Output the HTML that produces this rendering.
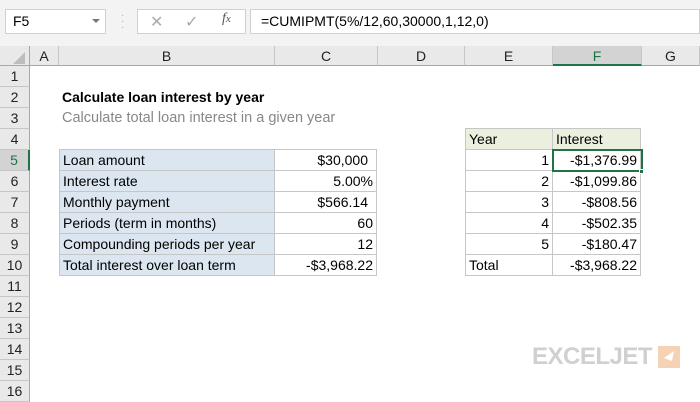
<!DOCTYPE html><html><head><meta charset="utf-8"><style>
*{margin:0;padding:0;box-sizing:border-box}
body{width:700px;height:400px;overflow:hidden;background:#fff;font-family:"Liberation Sans",Arial,sans-serif;position:relative;font-size:14px;color:#000}
.a{position:absolute}
.rh{position:absolute;left:0;width:30px;height:21px;background:#e9e9e9;border-bottom:1px solid #c6c6c6;border-right:1px solid #a8a8a8;text-align:center;line-height:21px;font-size:14px;color:#222}
.ch{position:absolute;top:46px;height:20px;background:#e9e9e9;border-right:1px solid #c6c6c6;border-bottom:1px solid #a8a8a8;text-align:center;line-height:20px;color:#222}
.c{position:absolute;height:22px;line-height:21px;padding:0 3px;white-space:nowrap;border:1px solid #c6c6c6;margin:-1px 0 0 -1px}
.r{text-align:right}
.bl{background:#dce6f0}
.gr{background:#ebf0de}
</style></head><body>
<div class="a" style="left:0;top:0;width:700px;height:46px;background:#f3f3f3"></div>
<div class="a" style="left:5px;top:9px;width:101px;height:25px;background:#fff;border:1px solid #d0d0d0;line-height:23px;padding-left:7px">F5</div>
<div class="a" style="left:92px;top:19px;width:0;height:0;border-left:4px solid transparent;border-right:4px solid transparent;border-top:4px solid #777"></div>
<div class="a" style="left:121px;top:13px;color:#aaa;font-size:10px;line-height:6px">·<br>·<br>·</div>
<div class="a" style="left:137px;top:9px;width:109px;height:25px;background:#fff;border:1px solid #d0d0d0"></div>
<div class="a" style="left:150px;top:12px;color:#aaa;font-size:16px">✕</div>
<div class="a" style="left:185px;top:12px;color:#aaa;font-size:16px">✓</div>
<div class="a" style="left:222px;top:11px;color:#555;font-family:'Liberation Serif',serif;font-style:italic;font-size:14px">f<span style="font-size:11px">x</span></div>
<div class="a" style="left:250px;top:9px;width:450px;height:25px;background:#fff;border:1px solid #d0d0d0;line-height:23px;padding-left:10px">=CUMIPMT(5%/12,60,30000,1,12,0)</div>
<div class="a" style="left:0;top:46px;width:30px;height:20px;background:#e9e9e9;border-right:1px solid #a8a8a8;border-bottom:1px solid #a8a8a8"></div>
<div class="a" style="left:13px;top:52px;width:0;height:0;border-left:12px solid transparent;border-bottom:12px solid #bdbdbd"></div>
<div class="ch" style="left:30px;width:29px">A</div>
<div class="ch" style="left:59px;width:216px">B</div>
<div class="ch" style="left:275px;width:103px">C</div>
<div class="ch" style="left:378px;width:87px">D</div>
<div class="ch" style="left:465px;width:88px">E</div>
<div class="ch" style="left:553px;width:89px;background:#d3d3d3;color:#217346;border-bottom:2px solid #217346">F</div>
<div class="ch" style="left:642px;width:58px">G</div>
<div class="rh" style="top:66px">1</div><div class="rh" style="top:87px">2</div><div class="rh" style="top:108px">3</div><div class="rh" style="top:129px">4</div>
<div class="rh" style="top:150px;background:#d3d3d3;color:#217346;border-right:2px solid #217346">5</div>
<div class="rh" style="top:171px">6</div><div class="rh" style="top:192px">7</div><div class="rh" style="top:213px">8</div><div class="rh" style="top:234px">9</div><div class="rh" style="top:255px">10</div><div class="rh" style="top:276px">11</div><div class="rh" style="top:297px">12</div><div class="rh" style="top:318px">13</div><div class="rh" style="top:339px">14</div><div class="rh" style="top:360px">15</div><div class="rh" style="top:381px">16</div>
<div class="a" style="left:62px;top:89px;font-weight:bold;font-size:14px">Calculate loan interest by year</div>
<div class="a" style="left:62px;top:110px;color:#888;font-size:14.5px">Calculate total loan interest in a given year</div>
<div class="c bl" style="left:60px;top:150px;width:216px">Loan amount</div><div class="c r" style="left:275px;top:150px;width:103px;padding-right:8px">$30,000</div>
<div class="c bl" style="left:60px;top:171px;width:216px">Interest rate</div><div class="c r" style="left:275px;top:171px;width:103px">5.00%</div>
<div class="c bl" style="left:60px;top:192px;width:216px">Monthly payment</div><div class="c r" style="left:275px;top:192px;width:103px;padding-right:8px">$566.14</div>
<div class="c bl" style="left:60px;top:213px;width:216px">Periods (term in months)</div><div class="c r" style="left:275px;top:213px;width:103px">60</div>
<div class="c bl" style="left:60px;top:234px;width:216px">Compounding periods per year</div><div class="c r" style="left:275px;top:234px;width:103px">12</div>
<div class="c bl" style="left:60px;top:255px;width:216px">Total interest over loan term</div><div class="c r" style="left:275px;top:255px;width:103px">-$3,968.22</div>
<div class="c gr" style="left:466px;top:129px;width:88px">Year</div><div class="c gr" style="left:553px;top:129px;width:89px">Interest</div>
<div class="c r" style="left:466px;top:150px;width:88px">1</div><div class="c r" style="left:553px;top:150px;width:89px">-$1,376.99</div>
<div class="c r" style="left:466px;top:171px;width:88px">2</div><div class="c r" style="left:553px;top:171px;width:89px">-$1,099.86</div>
<div class="c r" style="left:466px;top:192px;width:88px">3</div><div class="c r" style="left:553px;top:192px;width:89px">-$808.56</div>
<div class="c r" style="left:466px;top:213px;width:88px">4</div><div class="c r" style="left:553px;top:213px;width:89px">-$502.35</div>
<div class="c r" style="left:466px;top:234px;width:88px">5</div><div class="c r" style="left:553px;top:234px;width:89px">-$180.47</div>
<div class="c" style="left:466px;top:255px;width:88px">Total</div><div class="c r" style="left:553px;top:255px;width:89px">-$3,968.22</div>
<div class="a" style="left:552px;top:149px;width:91px;height:23px;border:2px solid #217346"></div>
<div class="a" style="left:639px;top:169px;width:5px;height:5px;background:#217346;border:1px solid #fff"></div>
<div class="a" style="left:532px;top:343px;font-weight:bold;font-size:24px;color:#d0d0d0;letter-spacing:-0.5px;font-family:'Liberation Sans',sans-serif">EXCELJET</div>
<div class="a" style="left:658px;top:346px;width:22px;height:22px;background:#f6d2b5"></div>
<svg class="a" style="left:658px;top:346px" width="22" height="22"><path d="M16 5 L6 12 L14 15 Z" fill="#fff"/></svg>
</body></html>
